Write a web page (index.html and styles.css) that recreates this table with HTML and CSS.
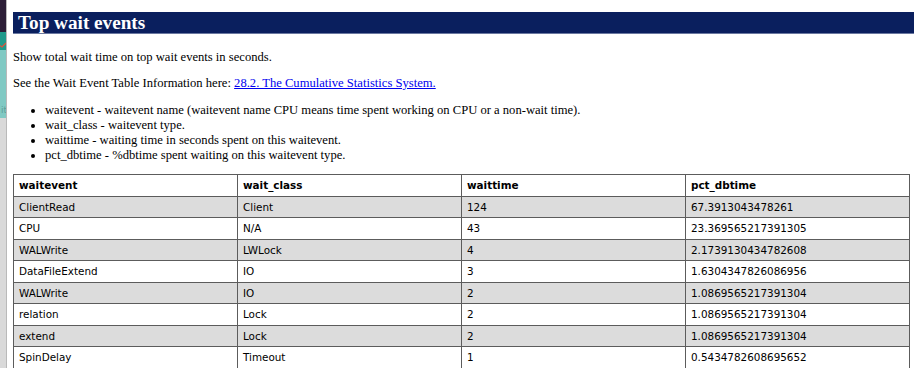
FILE: index.html
```html
<!DOCTYPE html>
<html>
<head>
<meta charset="utf-8">
<title>Top wait events</title>
<link rel="stylesheet" href="styles.css">
</head>
<body>
<div class="page">
  <div class="edge">
    <div class="edge-dark"></div>
    <div class="edge-teal">
      <svg class="edge-check" width="6" height="6" viewBox="0 0 6 6"><path d="M0 3.5 L2 5 L6 1" fill="none" stroke="#e0523a" stroke-width="1.3"/></svg>
    </div>
    <div class="edge-light"><span class="edge-text">it</span></div>
    <div class="edge-gray"></div>
  </div>
  <main class="content">
    <h2 class="title">Top wait events</h2>
    <p class="para">Show total wait time on top wait events in seconds.</p>
    <p class="para">See the Wait Event Table Information here: <a class="link" href="#">28.2. The Cumulative Statistics System.</a></p>
    <ul class="list">
      <li>waitevent - waitevent name (waitevent name CPU means time spent working on CPU or a non-wait time).</li>
      <li>wait_class - waitevent type.</li>
      <li>waittime - waiting time in seconds spent on this waitevent.</li>
      <li>pct_dbtime - %dbtime spent waiting on this waitevent type.</li>
    </ul>
    <table class="grid">
      <thead>
        <tr><th>waitevent</th><th>wait_class</th><th>waittime</th><th>pct_dbtime</th></tr>
      </thead>
      <tbody>
        <tr class="alt"><td>ClientRead</td><td>Client</td><td>124</td><td>67.3913043478261</td></tr>
        <tr><td>CPU</td><td>N/A</td><td>43</td><td>23.369565217391305</td></tr>
        <tr class="alt"><td>WALWrite</td><td>LWLock</td><td>4</td><td>2.1739130434782608</td></tr>
        <tr><td>DataFileExtend</td><td>IO</td><td>3</td><td>1.6304347826086956</td></tr>
        <tr class="alt"><td>WALWrite</td><td>IO</td><td>2</td><td>1.0869565217391304</td></tr>
        <tr><td>relation</td><td>Lock</td><td>2</td><td>1.0869565217391304</td></tr>
        <tr class="alt"><td>extend</td><td>Lock</td><td>2</td><td>1.0869565217391304</td></tr>
        <tr><td>SpinDelay</td><td>Timeout</td><td>1</td><td>0.5434782608695652</td></tr>
      </tbody>
    </table>
  </main>
</div>
</body>
</html>
```
FILE: styles.css
```css
html, body {
  margin: 0;
  padding: 0;
  background: #ffffff;
}
body {
  font-family: "Liberation Serif", "Times New Roman", serif;
  font-size: 12.6px;
  line-height: 15px;
  color: #000;
  overflow: hidden;
}
.page {
  display: flex;
  min-height: 368px;
}
.edge {
  width: 6px;
  flex: 0 0 6px;
  border-right: 1px solid #b9b9b9;
  display: flex;
  flex-direction: column;
  overflow: hidden;
}
.edge-dark {
  height: 32px;
  background: #2c1e36;
}
.edge-teal {
  height: 18px;
  background: #1f9a8b;
  display: flex;
  align-items: flex-end;
  justify-content: flex-end;
  padding-bottom: 2px;
  box-sizing: border-box;
}
.edge-check {
  display: block;
}
.edge-light {
  height: 68px;
  background: #80c9c3;
  display: flex;
  align-items: flex-end;
  justify-content: flex-end;
  padding-bottom: 3px;
  box-sizing: border-box;
}
.edge-text {
  font-family: "DejaVu Sans", sans-serif;
  font-size: 9px;
  line-height: 10px;
  color: #5f9d99;
  margin-right: -1px;
}
.edge-gray {
  flex: 1;
  background: #d9d9d9;
}
.content {
  flex: 1;
  padding: 0 2px 0 6px;
  min-width: 0;
}
.title {
  margin: 12px 0 15.5px;
  padding: 0 0 0 5px;
  font-size: 19.2px;
  line-height: 21px;
  font-weight: bold;
  color: #ffffff;
  background: #0a1f5e;
  border-bottom: 1px solid #6a78a0;
}
.para {
  margin: 11.5px 0;
}
.link {
  color: #0000ee;
  text-decoration: underline;
}
.list {
  margin: 11.5px 0;
  padding-left: 32px;
}
.grid {
  width: calc(100% - 4px);
  table-layout: fixed;
  border-collapse: collapse;
  border: 1px solid #333;
  font-family: "DejaVu Sans", Verdana, sans-serif;
  font-size: 10.4px;
}
.grid th,
.grid td {
  border: 1px solid #5c5c5c;
  padding: 4px 5px;
  line-height: 12.5px;
  text-align: left;
  white-space: nowrap;
  overflow: hidden;
}
.grid th {
  font-weight: bold;
  background: #ffffff;
}
.grid tr.alt td {
  background: #dcdcdc;
}
```
